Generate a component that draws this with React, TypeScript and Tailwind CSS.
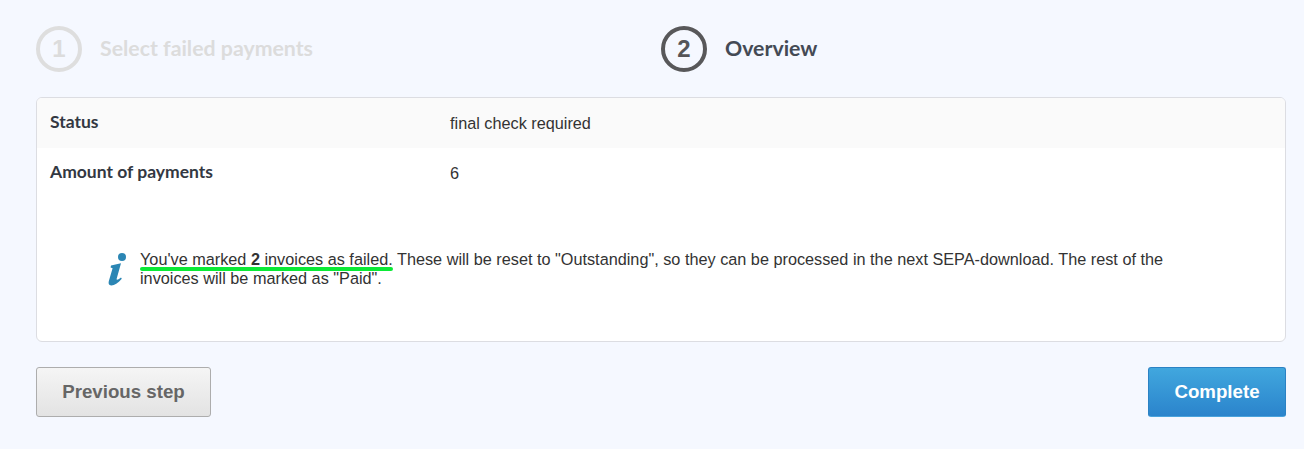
const lato = "font-['Lato','Noto_Sans',sans-serif]";

function Step({ num, label, active }: { num: number; label: string; active?: boolean }) {
  return (
    <div className={`flex items-center gap-[18px] pt-[1px] ${active ? "text-[#555558]" : "text-[#dcdcdc]"}`}>
      <div
        className={`flex h-[46px] w-[46px] items-center justify-center rounded-full border-[4px] text-[24px] font-bold ${
          active ? "border-[#58585a]" : "border-[#dedede]"
        }`}
      >
        {num}
      </div>
      <div className={`pt-[1px] text-[21.3px] font-bold ${lato} ${active ? "text-[#444a55]" : ""}`}>{label}</div>
    </div>
  );
}

function InfoIcon() {
  return (
    <svg width="20" height="34" viewBox="0 0 20 34" className="shrink-0">
      <circle cx="14" cy="5" r="4" fill="#2b86b4" />
      <path
        d="M3 13.5 L13 11.2 L8.6 27 C8.4 28.3 9.8 28.2 13 25.6 L13.8 26.8 C9.8 31.2 6.6 33.4 3.4 33.4 C0.6 33.4 0.2 31 1 28.5 L4.6 16.2 L2.6 15.5 Z"
        fill="#2b86b4"
      />
    </svg>
  );
}

export default function App() {
  return (
    <div className="h-[449px] w-[1304px] overflow-hidden bg-[#f5f8ff] pl-[36px] pr-[18px] font-['Liberation_Sans',Arial,sans-serif]">
      <div className="grid h-[97px] grid-cols-2 items-center pb-[1px]">
        <Step num={1} label="Select failed payments" />
        <Step num={2} label="Overview" active />
      </div>

      <div className="h-[245px] overflow-hidden rounded-[6px] border border-[#dcdde2] bg-white">
        <div className="flex h-[50px] items-center bg-[#fafafa] pb-[2px] pl-[13px]">
          <div className={`w-[400px] text-[17.5px] font-bold text-[#333842] ${lato}`}>Status</div>
          <div className="pt-[2px] text-[16.25px] text-[#333]">final check required</div>
        </div>
        <div className="flex h-[50px] items-center pb-[2px] pl-[13px]">
          <div className={`w-[400px] text-[17.5px] font-bold text-[#333842] ${lato}`}>Amount of payments</div>
          <div className="pt-[2px] text-[16.25px] text-[#333]">6</div>
        </div>
        <div className="flex items-start gap-[12px] pl-[71px] pr-[110px] pt-[52px]">
          <div className="pt-[2px]">
            <InfoIcon />
          </div>
          <p className="text-[16.25px] leading-[19px] text-[#333]">
            <span className="relative">
              You've marked <b>2</b> invoices as failed.
              <span className="absolute bottom-[-3px] left-0 right-0 h-[4px] rounded-full bg-[#0bea36]" />
            </span>{" "}
            These will be reset to "Outstanding", so they can be processed in the next SEPA-download. The rest of the
            invoices will be marked as "Paid".
          </p>
        </div>
      </div>

      <div className="mt-[25px] flex items-start justify-between">
        <button
          type="button"
          className="h-[50px] w-[175px] rounded-[3px] border border-[#adadad] bg-gradient-to-b from-[#f5f5f5] to-[#e3e3e3] pt-[1px] text-[18.7px] font-bold text-[#666]"
        >
          Previous step
        </button>
        <button
          type="button"
          className="h-[50px] w-[138px] rounded-[3px] border border-[#2b82c4] border-b-[#4aa3dc] bg-gradient-to-b from-[#41a7de] to-[#2b84cc] pt-[1px] text-[18.7px] font-bold text-white"
        >
          Complete
        </button>
      </div>
    </div>
  );
}
